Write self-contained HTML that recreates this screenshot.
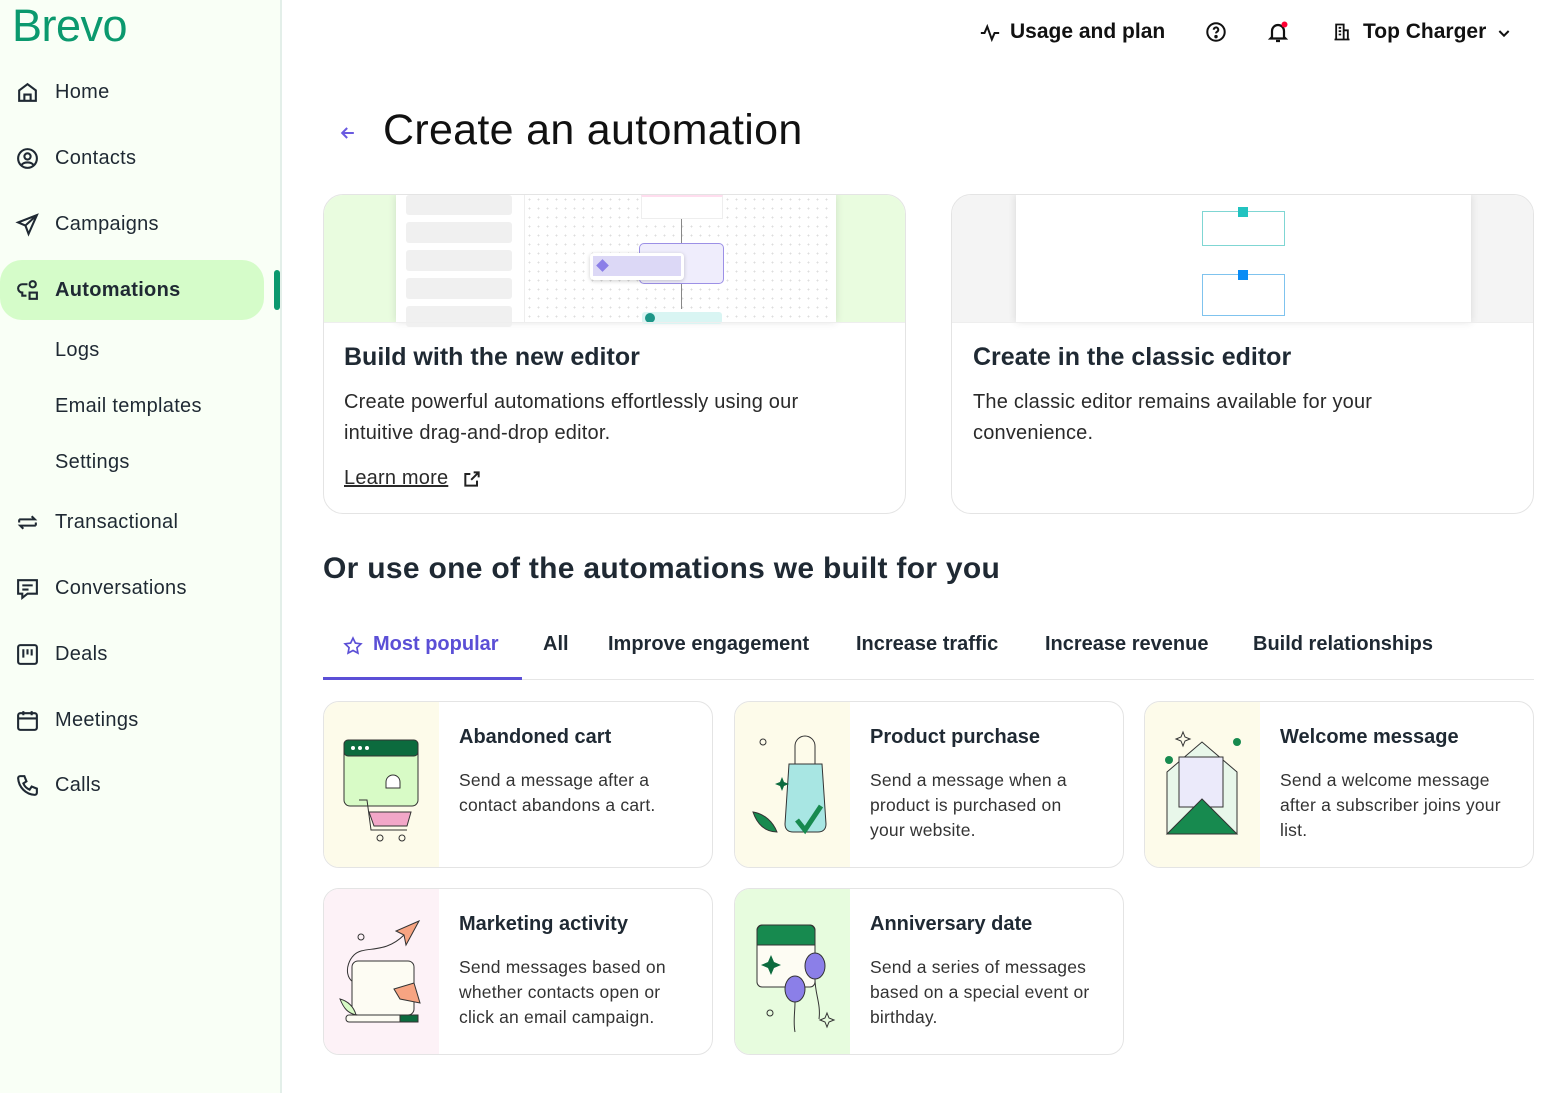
<!DOCTYPE html>
<html><head><meta charset="utf-8"><style>
*{box-sizing:border-box;margin:0;padding:0}
body{width:1568px;height:1093px;overflow:hidden;background:#fff;font-family:"Liberation Sans",sans-serif;color:#1f2933;position:relative}
.abs{position:absolute}
.side{left:0;top:0;width:282px;height:1093px;background:#f9fff6;border-right:2px solid #e3efe9}
.logo{left:12px;top:0px;font-size:45px;color:#0b996e;letter-spacing:-0.5px}
.nav{left:0;width:264px;height:60px;display:flex;align-items:center;font-size:20px;color:#1f2933}
.nav svg{position:absolute;left:15px;width:25px;height:25px}
.nav span{position:absolute;left:55px;letter-spacing:0.3px}
.act{background:#d5fcc9;border-radius:22px;font-weight:bold}
.sub{left:55px;font-size:20px;letter-spacing:0.3px}
.card{border:1px solid #e4e4e4;border-radius:20px;overflow:hidden;background:#fff}
.ct{font-size:25px;font-weight:bold;color:#1f2933}
.cb{font-size:20px;line-height:31px;color:#2a2a2a;letter-spacing:0.2px}
.tile{border:1px solid #e4e4e4;border-radius:16px;overflow:hidden;background:#fff;width:390px;height:167px}
.tile .img{position:absolute;left:0;top:0;width:115px;height:100%}
.tile h3{position:absolute;left:135px;top:24px;font-size:20px;color:#1f2933}
.tile p{position:absolute;left:135px;top:66px;font-size:17.5px;line-height:25px;color:#333;width:225px;letter-spacing:0.2px}
.tab{top:633px;font-size:20px;font-weight:bold;color:#1f2933}
</style></head><body>
<div class="abs side"></div>
<div class="abs logo">Brevo</div>
<div class="abs" style="left:274px;top:270px;width:6px;height:40px;background:#0b996e;border-radius:3px"></div>

<div class="abs nav" style="top:62px"><svg viewBox="0 0 24 24" fill="none" stroke="#1f2933" stroke-width="2"><path d="M4 10l8-6 8 6v10H4z M9 20v-6h6v6"/></svg><span>Home</span></div>
<div class="abs nav" style="top:128px"><svg viewBox="0 0 24 24" fill="none" stroke="#1f2933" stroke-width="2"><circle cx="12" cy="12" r="9"/><circle cx="12" cy="10" r="3"/><path d="M6.5 18c2-3 9-3 11 0"/></svg><span>Contacts</span></div>
<div class="abs nav" style="top:194px"><svg viewBox="0 0 24 24" fill="none" stroke="#1f2933" stroke-width="2"><path d="M21 3L3 10l7 3 3 8z M10 13l11-10"/></svg><span>Campaigns</span></div>
<div class="abs nav act" style="top:260px"><svg viewBox="0 0 24 24" fill="none" stroke="#1f2933" stroke-width="2"><circle cx="17" cy="6" r="3"/><rect x="14" y="14" width="7" height="6"/><path d="M12 6H7a4 4 0 0 0 0 8v3h4"/></svg><span>Automations</span></div>
<div class="abs sub" style="top:339px">Logs</div>
<div class="abs sub" style="top:395px">Email templates</div>
<div class="abs sub" style="top:451px">Settings</div>
<div class="abs nav" style="top:492px"><svg viewBox="0 0 24 24" fill="none" stroke="#1f2933" stroke-width="2"><path d="M4 9h15l-3-3 M20 15H5l3 3 M4 12V9 M20 12v3"/></svg><span>Transactional</span></div>
<div class="abs nav" style="top:558px"><svg viewBox="0 0 24 24" fill="none" stroke="#1f2933" stroke-width="2"><path d="M3 4h18v13h-9l-5 4v-4H3z M7 9h10 M7 13h6"/></svg><span>Conversations</span></div>
<div class="abs nav" style="top:624px"><svg viewBox="0 0 24 24" fill="none" stroke="#1f2933" stroke-width="2"><rect x="3" y="3" width="18" height="18" rx="2"/><path d="M8 7v8 M12 7v5 M16 7v6"/></svg><span>Deals</span></div>
<div class="abs nav" style="top:690px"><svg viewBox="0 0 24 24" fill="none" stroke="#1f2933" stroke-width="2"><rect x="3" y="5" width="18" height="16" rx="2"/><path d="M3 10h18 M8 3v4 M16 3v4"/></svg><span>Meetings</span></div>
<div class="abs nav" style="top:755px"><svg viewBox="0 0 24 24" fill="none" stroke="#1f2933" stroke-width="2"><path d="M5 3h4l2 5-3 2a11 11 0 0 0 6 6l2-3 5 2v4a2 2 0 0 1-2 2A17 17 0 0 1 3 5a2 2 0 0 1 2-2z"/></svg><span>Calls</span></div>

<!-- top bar -->
<svg class="abs" style="left:979px;top:22px" width="22" height="22" viewBox="0 0 24 24" fill="none" stroke="#111" stroke-width="2.2"><path d="M2 12h4l3-7 5 14 3-7h5"/></svg>
<div class="abs" style="left:1010px;top:20px;font-size:21px;font-weight:bold;color:#111">Usage and plan</div>
<svg class="abs" style="left:1205px;top:21px" width="22" height="22" viewBox="0 0 24 24" fill="none" stroke="#111" stroke-width="2.2"><circle cx="12" cy="12" r="9.5"/><path d="M9.5 9.5a2.5 2.5 0 1 1 3.5 2.3c-.7.4-1 .9-1 1.7"/><circle cx="12" cy="17" r=".8" fill="#111"/></svg>
<svg class="abs" style="left:1266px;top:20px" width="24" height="24" viewBox="0 0 24 24" fill="none" stroke="#111" stroke-width="2.2"><path d="M6 17V11a6 6 0 0 1 12 0v6l1.5 1.5h-15z M10 21h4"/><circle cx="18.5" cy="4.5" r="3" fill="#f03" stroke="none"/></svg>
<svg class="abs" style="left:1332px;top:22px" width="20" height="20" viewBox="0 0 24 24" fill="none" stroke="#111" stroke-width="2.2"><path d="M3 21h18 M5 21V3h9v18 M14 10h5v11 M8 7h3 M8 11h3 M8 15h3"/></svg>
<div class="abs" style="left:1363px;top:20px;font-size:21px;font-weight:bold;color:#111">Top Charger</div>
<svg class="abs" style="left:1496px;top:25px" width="16" height="16" viewBox="0 0 24 24" fill="none" stroke="#111" stroke-width="3"><path d="M5 9l7 7 7-7"/></svg>

<svg class="abs" style="left:338px;top:123px" width="20" height="20" viewBox="0 0 24 24" fill="none" stroke="#6a5ae0" stroke-width="2.4"><path d="M19 12H6 M11 6l-6 6 6 6"/></svg>
<div class="abs" style="left:383px;top:106px;font-size:43px;color:#111;letter-spacing:0.3px">Create an automation</div>

<!-- card 1 -->
<div class="abs card" style="left:323px;top:194px;width:583px;height:320px">
  <div class="abs" style="left:0;top:0;width:583px;height:127px;background:#e9fcdf"></div>
  <div class="abs" style="left:72px;top:0;width:440px;height:127px;background:#fff;box-shadow:0 0 8px rgba(0,0,0,.12)"></div>
  <div class="abs" style="left:200px;top:0;width:310px;height:127px;background-image:radial-gradient(#ddd 1px,transparent 1px);background-size:9px 9px;border-left:1px solid #eee"></div>
  <div class="abs" style="left:82px;top:0;width:106px;height:20px;background:#f0f0f0;border-radius:3px"></div>
  <div class="abs" style="left:82px;top:27px;width:106px;height:21px;background:#f0f0f0;border-radius:3px"></div>
  <div class="abs" style="left:82px;top:55px;width:106px;height:21px;background:#f0f0f0;border-radius:3px"></div>
  <div class="abs" style="left:82px;top:83px;width:106px;height:21px;background:#f0f0f0;border-radius:3px"></div>
  <div class="abs" style="left:82px;top:111px;width:106px;height:21px;background:#f0f0f0;border-radius:3px"></div>
  <div class="abs" style="left:317px;top:0;width:82px;height:24px;background:#fff;border:1px solid #eee;border-top:2px solid #fde"></div>
  <div class="abs" style="left:357px;top:24px;width:1px;height:90px;background:#888"></div>
  <div class="abs" style="left:315px;top:48px;width:85px;height:41px;background:#efedfc;border:1px solid #9c90e6;border-radius:5px"></div>
  <div class="abs" style="left:266px;top:58px;width:94px;height:27px;background:#fff;border-radius:4px;box-shadow:0 1px 4px rgba(0,0,0,.2)"></div>
  <div class="abs" style="left:269px;top:61px;width:88px;height:20px;background:#dcd8f6"></div>
  <div class="abs" style="left:274px;top:66px;width:9px;height:9px;background:#8b7fe8;transform:rotate(45deg)"></div>
  <div class="abs" style="left:318px;top:117px;width:80px;height:12px;background:#d9f5f3;border-radius:3px"></div>
  <div class="abs" style="left:321px;top:118px;width:10px;height:10px;background:#1d9688;border-radius:5px"></div>
  <div class="abs" style="left:0;top:127px;width:583px;height:1px;background:#eee"></div>
  <div class="abs ct" style="left:20px;top:148px">Build with the new editor</div>
  <div class="abs cb" style="left:20px;top:192px;width:500px">Create powerful automations effortlessly using our intuitive drag-and-drop editor.</div>
  <div class="abs cb" style="left:20px;top:268px;text-decoration:underline">Learn more</div>
  <svg class="abs" style="left:138px;top:274px" width="20" height="20" viewBox="0 0 24 24" fill="none" stroke="#222" stroke-width="2.4"><path d="M14 4h6v6 M20 4l-9 9 M18 14v6H4V6h6"/></svg>
</div>

<!-- card 2 -->
<div class="abs card" style="left:951px;top:194px;width:583px;height:320px">
  <div class="abs" style="left:0;top:0;width:583px;height:127px;background:#f4f4f4"></div>
  <div class="abs" style="left:64px;top:0;width:455px;height:127px;background:#fff;box-shadow:0 0 8px rgba(0,0,0,.12)"></div>
  <div class="abs" style="left:250px;top:16px;width:83px;height:35px;border:1px solid #7fd6d3"></div>
  <div class="abs" style="left:286px;top:12px;width:10px;height:10px;background:#22c3c0"></div>
  <div class="abs" style="left:250px;top:79px;width:83px;height:42px;border:1px solid #7fc3ee"></div>
  <div class="abs" style="left:286px;top:75px;width:10px;height:10px;background:#0a8cf5"></div>
  <div class="abs" style="left:0;top:127px;width:583px;height:1px;background:#eee"></div>
  <div class="abs ct" style="left:21px;top:148px">Create in the classic editor</div>
  <div class="abs cb" style="left:21px;top:192px;width:450px">The classic editor remains available for your convenience.</div>
</div>

<div class="abs" style="left:323px;top:552px;font-size:30px;font-weight:bold;color:#1f2933;letter-spacing:0.3px">Or use one of the automations we built for you</div>

<svg class="abs" style="left:343px;top:636px" width="20" height="20" viewBox="0 0 24 24" fill="none" stroke="#5b4fd6" stroke-width="2"><path d="M12 2.5l2.9 6 6.6.9-4.8 4.6 1.2 6.5L12 17.4l-5.9 3.1 1.2-6.5L2.5 9.4l6.6-.9z"/></svg>
<div class="abs tab" style="left:373px;color:#5b4fd6">Most popular</div>
<div class="abs tab" style="left:543px">All</div>
<div class="abs tab" style="left:608px">Improve engagement</div>
<div class="abs tab" style="left:856px">Increase traffic</div>
<div class="abs tab" style="left:1045px">Increase revenue</div>
<div class="abs tab" style="left:1253px">Build relationships</div>
<div class="abs" style="left:323px;top:679px;width:1211px;height:1px;background:#e6e6e6"></div>
<div class="abs" style="left:323px;top:677px;width:199px;height:3px;background:#5b4fd6"></div>

<div class="abs tile" style="left:323px;top:701px"><div class="img" style="background:#fdfbea">
<svg width="115" height="167" viewBox="0 0 115 167" fill="none" stroke="#333" stroke-width="1"><rect x="20" y="38" width="74" height="66" rx="6" fill="#d8fbc6"/><rect x="20" y="38" width="74" height="16" rx="4" fill="#0c6b3e"/><circle cx="29" cy="46" r="2" fill="#fff" stroke="none"/><circle cx="36" cy="46" r="2" fill="#fff" stroke="none"/><circle cx="43" cy="46" r="2" fill="#fff" stroke="none"/><path d="M62 86h14v-6a7 7 0 0 0-14 0z" fill="#fff"/><path d="M45 110h42l-4 14H50z" fill="#f2a7c8"/><path d="M35 98h8l4 30h36"/><circle cx="56" cy="136" r="3"/><circle cx="78" cy="136" r="3"/></svg></div><h3>Abandoned cart</h3><p>Send a message after a contact abandons a cart.</p></div>

<div class="abs tile" style="left:734px;top:701px"><div class="img" style="background:#fdfbea">
<svg width="115" height="167" viewBox="0 0 115 167" fill="none" stroke="#333" stroke-width="1"><path d="M60 62v-18a10 10 0 0 1 20 0v18"/><path d="M54 62h33l4 60c0 6-4 8-8 8H58c-4 0-8-2-8-8z" fill="#a8e6e3"/><path d="M18 110c4 12 12 20 24 20-4-10-12-18-24-20z" fill="#178a4f"/><path d="M62 118l8 10 16-24" stroke="#178a4f" stroke-width="5"/><circle cx="28" cy="40" r="3"/><path d="M47 75l2 5 5 2-5 2-2 5-2-5-5-2 5-2z" fill="#0c6b3e" stroke="none"/></svg></div><h3>Product purchase</h3><p>Send a message when a product is purchased on your website.</p></div>

<div class="abs tile" style="left:1144px;top:701px"><div class="img" style="background:#fdfbea">
<svg width="115" height="167" viewBox="0 0 115 167" fill="none" stroke="#333" stroke-width="1"><path d="M22 70l35-30 35 30v62H22z" fill="#e8f7ea"/><rect x="34" y="55" width="44" height="50" fill="#ebeafa"/><path d="M22 132l35-35 35 35z" fill="#178a4f"/><circle cx="92" cy="40" r="4" fill="#178a4f" stroke="none"/><circle cx="24" cy="58" r="4" fill="#178a4f" stroke="none"/><path d="M38 30l2 5 5 2-5 2-2 5-2-5-5-2 5-2z"/></svg></div><h3>Welcome message</h3><p style="width:240px">Send a welcome message after a subscriber joins your list.</p></div>

<div class="abs tile" style="left:323px;top:888px"><div class="img" style="background:#fdf2f7">
<svg width="115" height="167" viewBox="0 0 115 167" fill="none" stroke="#333" stroke-width="1"><path d="M95 32L72 42l8 4 2 10z" fill="#f7a482"/><path d="M80 46c-20 20-40 10-50 20s-10 30 10 30"/><rect x="28" y="72" width="62" height="54" rx="6" fill="#fdfcf3"/><path d="M70 100l20-6 6 20-20-4z" fill="#f7a482"/><rect x="22" y="126" width="72" height="7" rx="3" fill="#fdfcf3"/><rect x="76" y="126" width="18" height="7" fill="#0c6b3e"/><path d="M16 110c4 10 8 14 16 16-2-8-8-14-16-16z" fill="#d8fbc6"/><circle cx="37" cy="48" r="3"/></svg></div><h3>Marketing activity</h3><p>Send messages based on whether contacts open or click an email campaign.</p></div>

<div class="abs tile" style="left:734px;top:888px"><div class="img" style="background:#e7fcde">
<svg width="115" height="167" viewBox="0 0 115 167" fill="none" stroke="#333" stroke-width="1"><rect x="22" y="36" width="58" height="62" rx="5" fill="#fdfcf3"/><path d="M22 56V42a6 6 0 0 1 6-6h46a6 6 0 0 1 6 6v14z" fill="#178a4f"/><path d="M36 66l3 7 7 3-7 3-3 7-3-7-7-3 7-3z" fill="#0c6b3e" stroke="none"/><ellipse cx="80" cy="77" rx="10" ry="13" fill="#8b7fe8"/><ellipse cx="60" cy="100" rx="10" ry="13" fill="#8b7fe8"/><path d="M80 90c0 15 6 25 4 40 M60 113c0 10-2 20 0 30"/><circle cx="35" cy="124" r="3"/><path d="M92 124l2 5 5 2-5 2-2 5-2-5-5-2 5-2z"/></svg></div><h3>Anniversary date</h3><p>Send a series of messages based on a special event or birthday.</p></div>
</body></html>
